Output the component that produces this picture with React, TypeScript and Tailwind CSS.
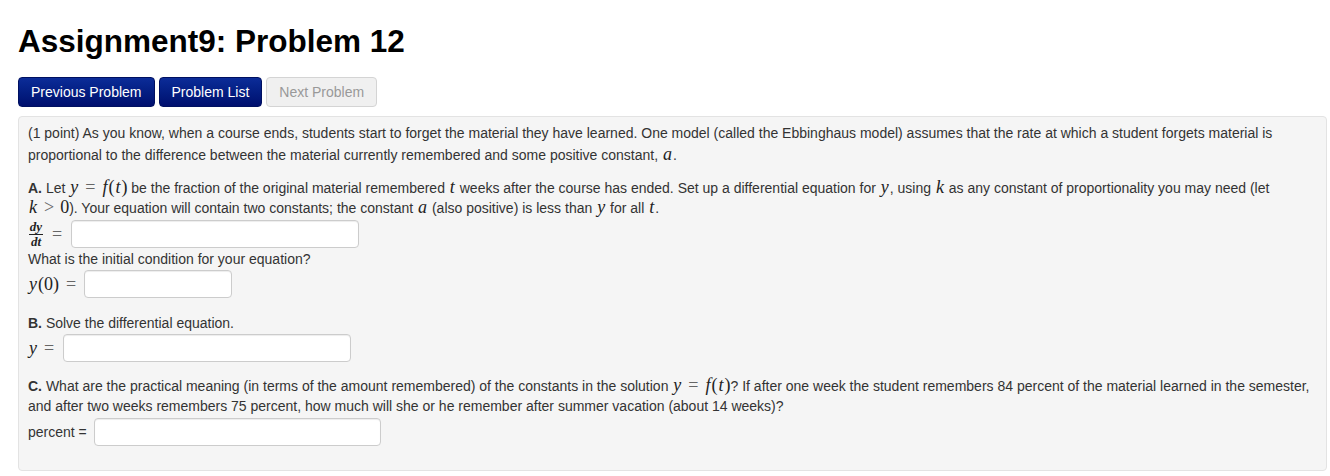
import React from "react";

const M = ({ children }: { children: React.ReactNode }) => (
  <span className="font-['Liberation_Serif',serif] italic text-[18px] leading-[14px] text-[#222] px-[1px]">{children}</span>
);
const R = ({ children }: { children: React.ReactNode }) => (
  <span className="font-['Liberation_Serif',serif] not-italic text-[18px] leading-[14px] text-[#222]">{children}</span>
);
const Rel = ({ children }: { children: React.ReactNode }) => (
  <span className="font-['Liberation_Serif',serif] not-italic text-[18px] leading-[14px] text-[#666] mx-[6px]">{children}</span>
);

const Input = ({ w }: { w: string }) => (
  <input
    className={`h-[28px] ${w} bg-white border border-[#cccccc] rounded-[4px] shadow-[inset_0_1px_1px_rgba(0,0,0,0.075)] outline-none`}
  />
);

export default function App() {
  return (
    <div className="font-['Liberation_Sans',Arial,sans-serif] text-[14px] text-[#333] bg-white min-h-[476px] px-[18px] pr-[3px]">
      <h1 className="text-[31.5px] font-bold leading-[40px] text-black pt-[21px]">Assignment9: Problem 12</h1>
      <div className="flex gap-[4px] mt-[16px]">
        <button className="h-[30px] px-[12px] leading-[20px] text-white rounded-[4px] border border-[#001060] bg-gradient-to-b from-[#0c2c98] to-[#000f6e]">
          Previous Problem
        </button>
        <button className="h-[30px] px-[12px] leading-[20px] text-white rounded-[4px] border border-[#001060] bg-gradient-to-b from-[#0c2c98] to-[#000f6e]">
          Problem List
        </button>
        <button className="h-[30px] px-[12px] leading-[20px] text-[#999] rounded-[4px] border border-[#d4d4d4] bg-[#f0f0f0]">
          Next Problem
        </button>
      </div>
      <div className="mt-[9px] bg-[#f5f5f5] border border-[#e3e3e3] rounded-[4px] px-[9px] pt-[5px] pb-[23px] h-[355px]">
        <p className="leading-[22px]">
          (1 point) As you know, when a course ends, students start to forget the material they have learned. One model (called the Ebbinghaus model) assumes that the rate at which a student forgets material is proportional to the difference between the material currently remembered and some positive constant, <M>a</M>.
        </p>
        <p className="leading-[20px] mt-[12px]">
          <b>A.</b> Let <span className="whitespace-nowrap"><M>y</M><Rel>=</Rel><M>f</M><R>(</R><M>t</M><R>)</R></span> be the fraction of the original material remembered <M>t</M> weeks after the course has ended. Set up a differential equation for <M>y</M>, using <M>k</M> as any constant of proportionality you may need (let <span className="whitespace-nowrap"><M>k</M><Rel>&gt;</Rel><R>0</R>).</span> Your equation will contain two constants; the constant <M>a</M> (also positive) is less than <M>y</M> for all <M>t</M>.
        </p>
        <div className="flex items-center mt-[2px] h-[28px]">
          <span className="inline-flex flex-col items-center font-['Liberation_Serif',serif] italic font-bold text-[13px] leading-[12px] text-[#222] ml-[1px]">
            <span>dy</span>
            <span className="w-[14px] border-t border-[#222] my-[1px]"></span>
            <span>dt</span>
          </span>
          <span className="font-['Liberation_Serif',serif] text-[18px] text-[#666] ml-[9px] mr-[9px]">=</span>
          <Input w="w-[288px]" />
        </div>
        <p className="leading-[20px] mt-[1px]">What is the initial condition for your equation?</p>
        <div className="flex items-center mt-[1px] h-[28px]">
          <M>y</M><R>(0)</R>
          <span className="font-['Liberation_Serif',serif] text-[18px] text-[#666] ml-[7px] mr-[8px]">=</span>
          <Input w="w-[148px]" />
        </div>
        <p className="leading-[20px] mt-[15px]"><b>B.</b> Solve the differential equation.</p>
        <div className="flex items-center mt-[1px] h-[28px]">
          <M>y</M>
          <span className="font-['Liberation_Serif',serif] text-[18px] text-[#666] ml-[6px] mr-[9px]">=</span>
          <Input w="w-[288px]" />
        </div>
        <p className="leading-[20px] mt-[14px]">
          <b>C.</b> What are the practical meaning (in terms of the amount remembered) of the constants in the solution <span className="whitespace-nowrap"><M>y</M><Rel>=</Rel><M>f</M><R>(</R><M>t</M><R>)</R>?</span> If after one week the student remembers 84 percent of the material learned in the semester, and after two weeks remembers 75 percent, how much will she or he remember after summer vacation (about 14 weeks)?
        </p>
        <div className="flex items-center mt-[2px] h-[28px]">
          <span>percent =</span>
          <span className="w-[7px]"></span>
          <Input w="w-[287px]" />
        </div>
      </div>
    </div>
  );
}
